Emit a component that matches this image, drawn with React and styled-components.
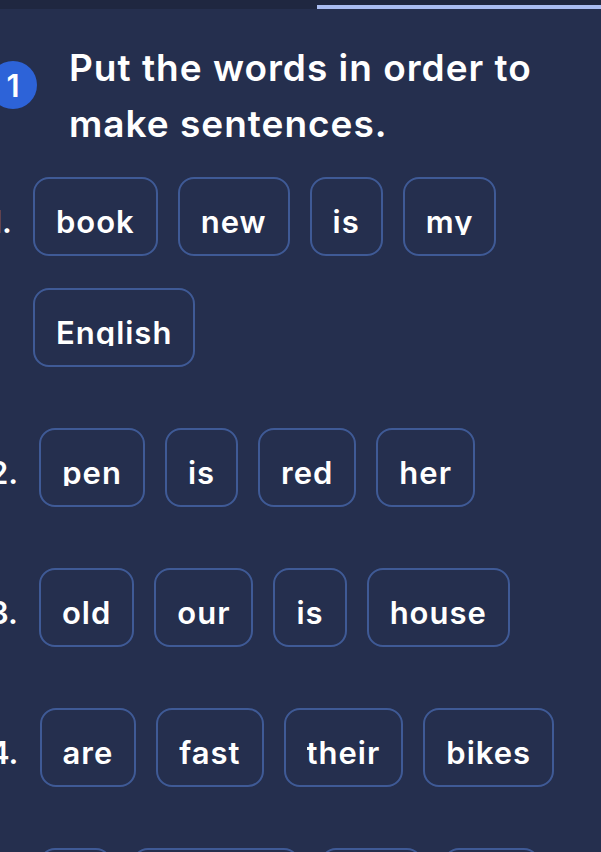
import React from 'react';
import styled, { createGlobalStyle } from 'styled-components';

const GlobalStyle = createGlobalStyle`
  html, body {
    margin: 0;
    padding: 0;
    background: #252f4e;
    overflow: hidden;
  }
  body {
    font-family: Inter, "Noto Sans", sans-serif;
    color: #ffffff;
  }
`;

const sentences = [
  ['book', 'new', 'is', 'my', 'English'],
  ['pen', 'is', 'red', 'her'],
  ['old', 'our', 'is', 'house'],
  ['are', 'fast', 'their', 'bikes'],
  ['is', 'teacher', 'she', 'the'],
];

const Page = styled.div`
  min-height: 100vh;
`;

const ProgressTrack = styled.div`
  height: 9px;
  background: #1f2740;
  display: flex;
  justify-content: flex-end;
  align-items: flex-end;
`;

const ProgressFill = styled.div`
  width: 284px;
  height: 4px;
  background: #a9bcf1;
`;

const Content = styled.main`
  margin-left: -11px;
  padding-top: 31px;
`;

const Heading = styled.header`
  display: flex;
  align-items: flex-start;
  gap: 32px;
`;

const Badge = styled.span`
  flex: none;
  width: 48px;
  height: 48px;
  margin-top: 21px;
  border-radius: 50%;
  background: #2d63d8;
  display: flex;
  align-items: center;
  justify-content: center;
  font-size: 31px;
  font-weight: 600;
`;

const Title = styled.h1`
  margin: 0;
  font-size: 37px;
  line-height: 56px;
  font-weight: 600;
  letter-spacing: 1px;
`;

const SentenceList = styled.ol`
  list-style: none;
  margin: 25px 0 0;
  padding: 0;
  display: flex;
  flex-direction: column;
  gap: 61px;
`;

const Sentence = styled.li`
  display: flex;
  align-items: flex-start;
  gap: 21px;
`;

const Number = styled.span`
  flex: none;
  padding-top: 29px;
  font-size: 31px;
  line-height: 31px;
  font-weight: 600;
`;

const Words = styled.div`
  flex: 1;
  display: flex;
  flex-wrap: wrap;
  gap: 32px 20px;
`;

const Chip = styled.button`
  box-sizing: border-box;
  height: 79px;
  padding: 27px 21px 0;
  border: 2px solid #3f5a96;
  border-radius: 16px;
  background: transparent;
  color: #ffffff;
  font-family: inherit;
  font-size: 31px;
  font-weight: 600;
  letter-spacing: 1px;
  cursor: pointer;
  display: flex;
  align-items: flex-start;
`;

// word labels are clipped just under the baseline
const ChipLabel = styled.span`
  display: block;
  height: 29px;
  line-height: 31px;
  overflow: hidden;
`;

export default function App() {
  return (
    <Page>
      <GlobalStyle />
      <ProgressTrack>
        <ProgressFill />
      </ProgressTrack>
      <Content>
        <Heading>
          <Badge>1</Badge>
          <Title>
            Put the words in order to
            <br />
            make sentences.
          </Title>
        </Heading>
        <SentenceList>
          {sentences.map((words, i) => (
            <Sentence key={i}>
              <Number>{i + 1}.</Number>
              <Words>
                {words.map((w, j) => (
                  <Chip key={j}>
                    <ChipLabel>{w}</ChipLabel>
                  </Chip>
                ))}
              </Words>
            </Sentence>
          ))}
        </SentenceList>
      </Content>
    </Page>
  );
}
